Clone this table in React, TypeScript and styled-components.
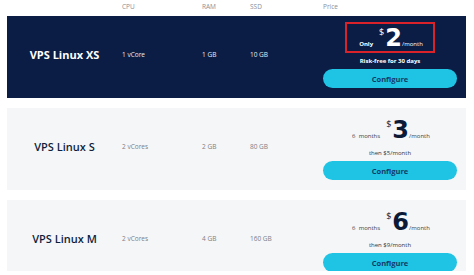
import styled, { createGlobalStyle } from 'styled-components';

const GlobalStyle = createGlobalStyle`
  body {
    margin: 0;
    background: #ffffff;
    font-family: 'Open Sans', 'Liberation Sans', sans-serif;
  }
`;

type Plan = {
  name: string;
  cpu: string;
  ram: string;
  ssd: string;
  prefix: string;
  amount: string;
  note: string;
  featured?: boolean;
};

const plans: Plan[] = [
  {
    name: 'VPS Linux XS',
    cpu: '1 vCore',
    ram: '1 GB',
    ssd: '10 GB',
    prefix: 'Only',
    amount: '2',
    note: 'Risk-free for 30 days',
    featured: true,
  },
  {
    name: 'VPS Linux S',
    cpu: '2 vCores',
    ram: '2 GB',
    ssd: '80 GB',
    prefix: '6  months',
    amount: '3',
    note: 'then $5/month',
  },
  {
    name: 'VPS Linux M',
    cpu: '2 vCores',
    ram: '4 GB',
    ssd: '160 GB',
    prefix: '6  months',
    amount: '6',
    note: 'then $9/month',
  },
];

const App = () => {
  return (
    <Page>
      <GlobalStyle />
      <HeaderRow>
        <span />
        <HeaderCell>CPU</HeaderCell>
        <HeaderCell>RAM</HeaderCell>
        <HeaderCell>SSD</HeaderCell>
        <HeaderCell>Price</HeaderCell>
      </HeaderRow>
      <List>
        {plans.map((plan) => (
          <PlanRow key={plan.name} $featured={plan.featured}>
            <PlanName $featured={plan.featured}>{plan.name}</PlanName>
            <Spec $featured={plan.featured}>{plan.cpu}</Spec>
            <Spec $featured={plan.featured}>{plan.ram}</Spec>
            <Spec $featured={plan.featured}>{plan.ssd}</Spec>
            <PriceColumn>
              <PriceBox $highlight={plan.featured}>
                <Prefix $featured={plan.featured}>{plan.prefix}</Prefix>
                <Amount $featured={plan.featured}>
                  <Currency>$</Currency>
                  {plan.amount}
                </Amount>
                <Period $featured={plan.featured}>/month</Period>
              </PriceBox>
              <Note $featured={plan.featured}>{plan.note}</Note>
              <ConfigureButton type="button">Configure</ConfigureButton>
            </PriceColumn>
          </PlanRow>
        ))}
      </List>
    </Page>
  );
};

export default App;

const Page = styled.main`
  width: 474px;
  height: 271px;
  overflow: hidden;
  padding-left: 7px;
  box-sizing: border-box;
`;

const columns = '115px 80px 48px 73px 134px';

const HeaderRow = styled.div`
  display: grid;
  grid-template-columns: ${columns};
  height: 16px;
  padding-top: 3px;
  box-sizing: border-box;
`;

const HeaderCell = styled.span`
  font-size: 6.5px;
  line-height: 8px;
  color: #8a8f98;
`;

const List = styled.div`
  display: flex;
  flex-direction: column;
  gap: 10px;
`;

const PlanRow = styled.div<{ $featured?: boolean }>`
  display: grid;
  grid-template-columns: ${columns};
  align-items: center;
  width: 459px;
  height: 82px;
  box-sizing: border-box;
  padding: 6px 9px 10px 0;
  background: ${({ $featured }) => ($featured ? '#0b1d45' : '#f5f6f8')};
`;

const PlanName = styled.h2<{ $featured?: boolean }>`
  margin: 0;
  text-align: center;
  font-size: 11px;
  line-height: 14px;
  font-weight: ${({ $featured }) => ($featured ? 700 : 600)};
  color: ${({ $featured }) => ($featured ? '#ffffff' : '#0d1f3c')};
`;

const Spec = styled.span<{ $featured?: boolean }>`
  font-size: 6.5px;
  line-height: 8px;
  color: ${({ $featured }) => ($featured ? '#e8ebf2' : '#7a7f88')};
`;

const PriceColumn = styled.div`
  display: flex;
  flex-direction: column;
  align-items: center;
  align-self: stretch;
`;

const PriceBox = styled.div<{ $highlight?: boolean }>`
  display: flex;
  align-items: baseline;
  justify-content: center;
  gap: 4px;
  height: 31px;
  box-sizing: border-box;
  padding: 2px 10px 0 12px;
  border: 2px solid ${({ $highlight }) => ($highlight ? '#d9222a' : 'transparent')};
`;

const Prefix = styled.span<{ $featured?: boolean }>`
  font-size: 6px;
  white-space: pre;
  font-weight: ${({ $featured }) => ($featured ? 700 : 400)};
  color: ${({ $featured }) => ($featured ? '#ffffff' : '#3a3f48')};
  margin-right: 2px;
`;

const Amount = styled.span<{ $featured?: boolean }>`
  font-family: 'DejaVu Sans', 'Liberation Sans', sans-serif;
  font-size: 24px;
  line-height: 1;
  font-weight: 700;
  color: ${({ $featured }) => ($featured ? '#ffffff' : '#0b1a36')};
`;

const Currency = styled.span`
  font-family: 'Open Sans', sans-serif;
  font-size: 9px;
  font-weight: 400;
  line-height: 1.4;
  vertical-align: top;
  margin-right: 1px;
`;

const Period = styled.span<{ $featured?: boolean }>`
  font-size: 6px;
  margin-left: -4px;
  color: ${({ $featured }) => ($featured ? '#ffffff' : '#3a3f48')};
`;

const Note = styled.span<{ $featured?: boolean }>`
  margin-top: 4px;
  font-size: 6px;
  line-height: 8px;
  font-weight: ${({ $featured }) => ($featured ? 700 : 400)};
  color: ${({ $featured }) => ($featured ? '#ffffff' : '#2f3440')};
`;

const ConfigureButton = styled.button`
  margin-top: 4px;
  width: 134px;
  height: 19px;
  border: none;
  border-radius: 10px;
  background: #1fc3e4;
  color: #123c68;
  font-family: 'Open Sans', sans-serif;
  font-size: 7.5px;
  font-weight: 700;
  cursor: pointer;
`;
